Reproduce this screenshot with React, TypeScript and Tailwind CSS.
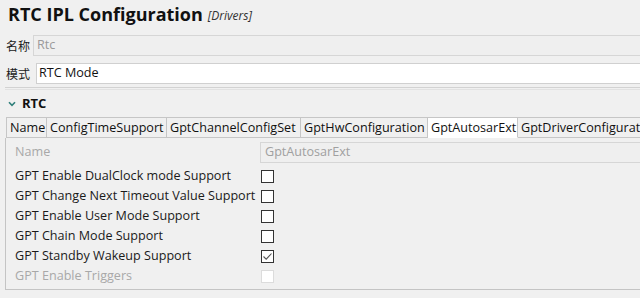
import React from "react";

const tabs = [
  { label: "Name", w: 41 },
  { label: "ConfigTimeSupport", w: 120 },
  { label: "GptChannelConfigSet", w: 134 },
  { label: "GptHwConfiguration", w: 127 },
  { label: "GptAutosarExt", w: 90, active: true },
  { label: "GptDriverConfiguration", w: 150 },
];

const rows: { label: string; checked?: boolean; disabled?: boolean }[] = [
  { label: "GPT Enable DualClock mode Support" },
  { label: "GPT Change Next Timeout Value Support" },
  { label: "GPT Enable User Mode Support" },
  { label: "GPT Chain Mode Support" },
  { label: "GPT Standby Wakeup Support", checked: true },
  { label: "GPT Enable Triggers", disabled: true },
];

function Checkbox({ checked, disabled }: { checked?: boolean; disabled?: boolean }) {
  return (
    <div
      className={
        "w-[13px] h-[13px] border flex items-center justify-center " +
        (disabled ? "border-[#dcdcdc] bg-white" : "border-[#333333] bg-white")
      }
    >
      {checked && (
        <svg width="11" height="11" viewBox="0 0 11 11">
          <path d="M1.5 5.5 L4.2 8.2 L9.5 2.5" fill="none" stroke="#555555" strokeWidth="1.1" />
        </svg>
      )}
    </div>
  );
}

export default function App() {
  return (
    <div className="w-[640px] h-[298px] bg-[#f0f0f0] overflow-hidden font-['Open_Sans',sans-serif] text-[12.6px] text-[#1a1a1a]">
      {/* Title */}
      <div className="h-[33px] pt-[2px] pl-[8px] flex items-start">
        <span className="text-[18px] font-bold leading-[24px] text-[#111]">RTC IPL Configuration</span>
        <span className="ml-[5px] mt-[6px] text-[12px] italic leading-[16px] text-[#333]">[Drivers]</span>
      </div>
      {/* 名称 */}
      <div className="mt-[2px] h-[21px] flex items-center pl-[6px]">
        <span className="w-[27px] leading-[20px] font-['Noto_Sans_CJK_SC',sans-serif] text-[12px]">名称</span>
        <div className="flex-1 h-[21px] -mr-[2px] border border-[#d6d6d6] bg-[#efefef] flex items-center pl-[3px] text-[#9a9a9a]">
          Rtc
        </div>
      </div>
      {/* 模式 */}
      <div className="mt-[7px] h-[21px] flex items-center pl-[6px]">
        <span className="w-[30px] leading-[20px] font-['Noto_Sans_CJK_SC',sans-serif] text-[12px]">模式</span>
        <div className="flex-1 h-[21px] -mr-[2px] border border-[#d0d0d0] bg-white flex items-center pl-[2px] text-[#111]">
          RTC Mode
        </div>
      </div>
      {/* separator */}
      <div className="mt-[3px] ml-[5px] h-[3px] border-t border-b border-t-[#d2d2d2] border-b-[#e2e2e2]" />
      {/* section header */}
      <div className="mt-[5px] h-[18px] flex items-center pl-[8px]">
        <svg width="8" height="6" viewBox="0 0 8 6" className="mr-[6px]">
          <path d="M1 1.2 L4 4.4 L7 1.2" fill="none" stroke="#2f7f7a" strokeWidth="1.6" />
        </svg>
        <span className="font-bold text-[13px] text-[#111]">RTC</span>
      </div>
      {/* tabs */}
      <div className="mt-[4px] ml-[6px] h-[21px] flex whitespace-nowrap">
        {tabs.map((t, i) => (
          <div
            key={t.label}
            style={{ width: t.w }}
            className={
              "shrink-0 h-[21px] border-t border-b border-r border-[#c6c6c6] flex items-center pl-[3px] overflow-hidden leading-[20px] " +
              (i === 0 ? "border-l " : "") +
              (t.active ? "bg-white border-b-white text-[#111]" : "bg-[#f0f0f0] text-[#111]")
            }
          >
            {t.label}
          </div>
        ))}
      </div>
      {/* panel */}
      <div className="ml-[5px] h-[152px] border-l border-b border-[#c4c4c4] pl-[9px] pt-[4px]">
        <div className="h-[21px] flex items-center">
          <span className="w-[245px] text-[#a8a8a8]">Name</span>
          <div className="flex-1 h-[21px] border border-[#d6d6d6] bg-[#efefef] flex items-center pl-[4px] text-[#a0a0a0] -mr-[2px]">
            GptAutosarExt
          </div>
        </div>
        <div className="mt-[3px]">
          {rows.map((r) => (
            <div key={r.label} className="h-[20px] flex items-center">
              <span className={"w-[246px] whitespace-nowrap " + (r.disabled ? "text-[#a8a8a8]" : "text-[#1a1a1a]")}>
                {r.label}
              </span>
              <Checkbox checked={r.checked} disabled={r.disabled} />
            </div>
          ))}
        </div>
      </div>
    </div>
  );
}
